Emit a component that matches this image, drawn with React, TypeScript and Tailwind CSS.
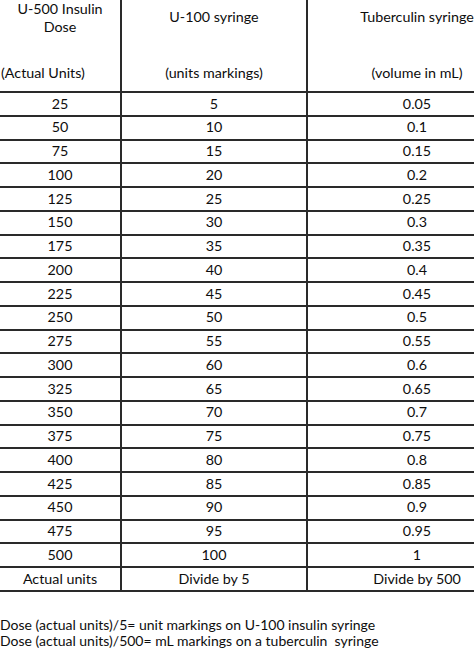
import React from "react";

const rows: [string, string, string][] = [
  ["25", "5", "0.05"],
  ["50", "10", "0.1"],
  ["75", "15", "0.15"],
  ["100", "20", "0.2"],
  ["125", "25", "0.25"],
  ["150", "30", "0.3"],
  ["175", "35", "0.35"],
  ["200", "40", "0.4"],
  ["225", "45", "0.45"],
  ["250", "50", "0.5"],
  ["275", "55", "0.55"],
  ["300", "60", "0.6"],
  ["325", "65", "0.65"],
  ["350", "70", "0.7"],
  ["375", "75", "0.75"],
  ["400", "80", "0.8"],
  ["425", "85", "0.85"],
  ["450", "90", "0.9"],
  ["475", "95", "0.95"],
  ["500", "100", "1"],
  ["Actual units", "Divide by 5", "Divide by 500"],
];

export default function App() {
  return (
    <div
      className="w-[474px] h-[654px] overflow-hidden bg-white text-[#0d0d0d] text-[14.3px]"
      style={{ fontFamily: "Lato, 'Open Sans', sans-serif" }}
    >
      <div className="ml-[-5px] w-[531px]">
        <div className="flex h-[93px] border-b-2 border-[#2a2a2a]">
          <div className="w-[127px] border-r-2 border-[#2a2a2a] flex flex-col leading-[18px]">
            <div className="text-center pl-[5px]">U-500 Insulin</div>
            <div className="text-center pl-[5px]">Dose</div>
            <div className="mt-[28px] pl-[6px] whitespace-nowrap">(Actual Units)</div>
          </div>
          <div className="w-[186px] border-r-2 border-[#2a2a2a] flex flex-col items-center leading-[18px] pt-[8px]">
            <div>U-100 syringe</div>
            <div className="mt-[38px]">(units markings)</div>
          </div>
          <div className="w-[218px] flex flex-col items-center leading-[18px] pt-[8px]">
            <div className="whitespace-nowrap">Tuberculin syringe</div>
            <div className="mt-[38px]">(volume in mL)</div>
          </div>
        </div>
        {rows.map((r, i) => (
          <div key={i} className="flex h-[23.76px] border-b-2 border-[#2a2a2a] leading-none">
            <div className="w-[127px] border-r-2 border-[#2a2a2a] flex items-center justify-center pl-[5px]">
              {r[0]}
            </div>
            <div className="w-[186px] border-r-2 border-[#2a2a2a] flex items-center justify-center">
              {r[1]}
            </div>
            <div className="w-[218px] flex items-center justify-center">{r[2]}</div>
          </div>
        ))}
      </div>
      <div className="mt-[25px] leading-[16px] whitespace-nowrap text-[14px]">
        <div>Dose (actual units)/5= unit markings on U-100 insulin syringe</div>
        <div>Dose (actual units)/500= mL markings on a tuberculin&nbsp; syringe</div>
      </div>
    </div>
  );
}
